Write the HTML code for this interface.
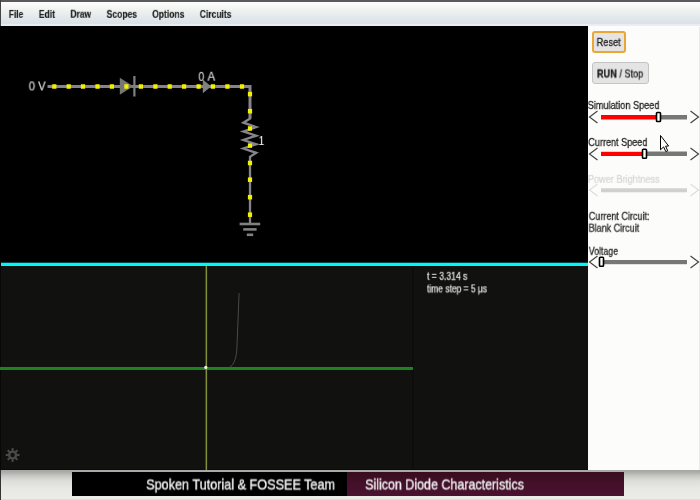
<!DOCTYPE html>
<html><head><meta charset="utf-8">
<style>
html,body{margin:0;padding:0;width:700px;height:500px;overflow:hidden;background:#000;}
body{position:relative;font-family:"Liberation Sans",sans-serif;}
.a{position:absolute;}
.t{position:absolute;white-space:nowrap;line-height:1;transform-origin:0 0;will-change:transform;}
#menubar{left:0;top:0;width:700px;height:26px;background:linear-gradient(#fbfcfb 0px,#fbfcfb 3px,#f1f4f1 9px,#e5eaec 16px,#dbe2ea 22.5px,#dde1eb 23.5px,#e9ecf3 24.5px,#eceef4 26px);}
#menutop{left:0;top:0;width:700px;height:2px;background:#5a5a5a;}
#menuleft{left:0;top:0;width:1px;height:26px;background:#444;}
.mi{font-weight:bold;font-size:12px;color:#1a1a1a;top:9px;}
#canvas{left:0;top:26px;width:588px;height:237px;background:#000;}
#panel{left:588px;top:26px;width:112px;height:444px;background:#fcfcfa;}
#scope{left:0;top:266px;width:588px;height:204px;background:#111110;}
#cyan{left:1px;top:263px;width:587px;height:3px;background:#00f8f8;box-shadow:0 1px 0 #005a5a,0 -1px 0 #004848;}
.btn{position:absolute;box-sizing:border-box;background:#e4e4e4;border-radius:3px;}
.pt{font-size:11px;color:#333;}
#bottom{left:0;top:470px;width:700px;height:30px;background:linear-gradient(#a6a7a3 0px,#abaca8 2px,#c8c9c5 6px,#dddeda 11px,#e7e8e4 18px,#ebece8 26px,#ebece8 28.5px,#d6d7d3 30px);}
</style></head><body>
<div class="a" id="menubar"></div>
<div class="a" id="menutop"></div>
<div class="a" id="menuleft"></div>
<div class="t" style="left:0;top:0;font-size:11px;font-weight:bold;color:#1a1a1a;-webkit-text-stroke:0.15px #1a1a1a;transform:translate(8.82px,8.89px) scaleX(0.7618);">File</div>
<div class="t" style="left:0;top:0;font-size:11px;font-weight:bold;color:#1a1a1a;-webkit-text-stroke:0.15px #1a1a1a;transform:translate(38.82px,8.90px) scaleX(0.7824);">Edit</div>
<div class="t" style="left:0;top:0;font-size:11px;font-weight:bold;color:#1a1a1a;-webkit-text-stroke:0.15px #1a1a1a;transform:translate(70.42px,8.74px) scaleX(0.7685);">Draw</div>
<div class="t" style="left:0;top:0;font-size:11px;font-weight:bold;color:#1a1a1a;-webkit-text-stroke:0.15px #1a1a1a;transform:translate(106.62px,8.85px) scaleX(0.7769);">Scopes</div>
<div class="t" style="left:0;top:0;font-size:11px;font-weight:bold;color:#1a1a1a;-webkit-text-stroke:0.15px #1a1a1a;transform:translate(152.16px,8.85px) scaleX(0.7742);">Options</div>
<div class="t" style="left:0;top:0;font-size:11px;font-weight:bold;color:#1a1a1a;-webkit-text-stroke:0.15px #1a1a1a;transform:translate(199.75px,8.88px) scaleX(0.7733);">Circuits</div>

<div class="a" id="canvas"></div>
<div class="a" id="panel"></div>
<div class="a" style="left:699px;top:27px;width:1px;height:443px;background:#e9e9e7;"></div>

<!-- buttons -->
<div class="btn" style="left:592px;top:31px;width:34px;height:22px;border:2px solid #eca634;"></div>
<div class="t" style="left:0;top:0;font-size:10.5px;font-weight:normal;color:#1c1c1c;-webkit-text-stroke:0.3px #1c1c1c;transform:translate(596.67px,37.05px) scaleX(0.8732);">Reset</div>
<div class="btn" style="left:592px;top:62px;width:57px;height:22px;border:1px solid #c4c4c4;"></div>
<div class="t" style="left:0;top:0;font-size:10.5px;font-weight:normal;color:#1c1c1c;-webkit-text-stroke:0.3px #1c1c1c;transform:translate(596.95px,68.49px) scaleX(0.8716);"><b>RUN</b> / Stop</div>

<div class="t" style="left:0;top:0;font-size:10.5px;font-weight:normal;color:#262626;-webkit-text-stroke:0.3px #262626;transform:translate(587.69px,99.99px) scaleX(0.8715);">Simulation Speed</div>
<div class="t" style="left:0;top:0;font-size:10.5px;font-weight:normal;color:#262626;-webkit-text-stroke:0.3px #262626;transform:translate(588.29px,136.94px) scaleX(0.8649);">Current Speed</div>
<div class="t" style="left:0;top:0;font-size:10.5px;font-weight:normal;color:#d4d4d4;-webkit-text-stroke:0.2px #d4d4d4;transform:translate(587.93px,173.83px) scaleX(0.8710);">Power Brightness</div>
<div class="t" style="left:0;top:0;font-size:10.5px;font-weight:normal;color:#262626;-webkit-text-stroke:0.3px #262626;transform:translate(588.73px,210.84px) scaleX(0.8612);">Current Circuit:</div>
<div class="t" style="left:0;top:0;font-size:10.5px;font-weight:normal;color:#262626;-webkit-text-stroke:0.3px #262626;transform:translate(588.59px,222.72px) scaleX(0.8591);">Blank Circuit</div>
<div class="t" style="left:0;top:0;font-size:10.5px;font-weight:normal;color:#262626;-webkit-text-stroke:0.3px #262626;transform:translate(588.77px,245.85px) scaleX(0.8370);">Voltage</div>

<svg class="a" style="left:588px;top:27px;" width="112" height="443" viewBox="588 27 112 443">
  <g fill="none" stroke-linecap="butt">
    <!-- sim speed -->
    <polyline points="597.5,111 589.5,117 597.5,123" stroke="#444" stroke-width="1.2"/>
    <polyline points="690.5,111 698.5,117 690.5,123" stroke="#444" stroke-width="1.2"/>
    <rect x="601" y="115" width="56" height="4.5" fill="#f00" stroke="none"/>
    <rect x="659" y="115" width="28" height="4.5" fill="#777" stroke="none"/>
    <rect x="656.5" y="112.5" width="4" height="9" fill="#fff" stroke="#000" stroke-width="1.6" rx="0.8"/>
    <!-- current speed -->
    <polyline points="597.5,148 589.5,154 597.5,160" stroke="#444" stroke-width="1.2"/>
    <polyline points="690.5,148 698.5,154 690.5,160" stroke="#444" stroke-width="1.2"/>
    <rect x="601" y="151.8" width="42" height="4.2" fill="#f00" stroke="none"/>
    <rect x="645" y="151.5" width="42" height="4.5" fill="#777" stroke="none"/>
    <rect x="642.5" y="149.3" width="4" height="9" fill="#fff" stroke="#000" stroke-width="1.6" rx="0.8"/>
    <!-- power brightness -->
    <polyline points="597.5,184 589.5,190 597.5,196" stroke="#ddd" stroke-width="1.2"/>
    <polyline points="690.5,184 698.5,190 690.5,196" stroke="#ddd" stroke-width="1.2"/>
    <rect x="601" y="188.3" width="86" height="4" fill="#d0d0d0" stroke="none"/>
    <!-- voltage -->
    <polyline points="597.5,256 589.5,262 597.5,268" stroke="#444" stroke-width="1.2"/>
    <polyline points="690.5,256 698.5,262 690.5,268" stroke="#444" stroke-width="1.2"/>
    <rect x="603" y="260" width="84" height="4.2" fill="#777" stroke="none"/>
    <rect x="599.5" y="257.2" width="4" height="9" fill="#fff" stroke="#000" stroke-width="1.6" rx="0.8"/>
    <!-- cursor -->
    <path d="M660.5,135.5 L660.5,149.8 L663.6,146.9 L665.8,151.6 L667.7,150.8 L665.6,146.2 L668.6,146.0 Z" fill="#fff" stroke="#000" stroke-width="1"/>
  </g>
</svg>

<div class="a" id="cyan"></div>
<div class="a" id="scope"></div>
<div class="a" style="left:0;top:469px;width:588px;height:1px;background:#0b0b0a;"></div>
<div class="a" style="left:0;top:266px;width:1px;height:204px;background:#070707;"></div>

<svg class="a" style="left:0;top:27px;" width="588" height="443" viewBox="0 27 588 443">
  <!-- circuit wires -->
  <g stroke="#84848a" stroke-width="3" fill="none">
    <polyline points="47.5,86.4 120,86.4"/>
    <polyline points="134,86.4 250,86.4 250,118.6"/>
    <polyline points="250,116.5 250,118.6 243.4,122.7 256.2,127.1 243.4,131.4 256.2,135.7 243.4,140 256.2,144.2 243.4,148.5 256.2,152.8 250,156.8 250,224" stroke-width="2.3" stroke-linejoin="miter" stroke-miterlimit="10"/>
    <line x1="120" y1="86.4" x2="134" y2="86.4"/>
  </g>
  <polygon points="119.8,77.7 119.8,94.7 133.2,86.2" fill="#767676"/>
  <rect x="133.3" y="76" width="2.2" height="20.5" fill="#808080"/>
  <polygon points="202.8,79.6 202.8,93.3 211.2,86.4" fill="#808080"/>
  <g stroke="#808080" stroke-width="2.6">
    <line x1="239.6" y1="224" x2="260.2" y2="224"/>
    <line x1="243.2" y1="229.4" x2="256.6" y2="229.4"/>
    <line x1="246.8" y1="234.8" x2="253.2" y2="234.8"/>
  </g>
  <g fill="#f2f200">
    <rect x="52.20" y="84.25" width="4.2" height="4.5"/>
    <rect x="66.60" y="84.25" width="4.2" height="4.5"/>
    <rect x="80.90" y="84.25" width="4.2" height="4.5"/>
    <rect x="95.40" y="84.25" width="4.2" height="4.5"/>
    <rect x="109.80" y="84.25" width="4.2" height="4.5"/>
    <rect x="124.30" y="84.25" width="4.2" height="4.5"/>
    <rect x="138.80" y="84.25" width="4.2" height="4.5"/>
    <rect x="153.30" y="84.25" width="4.2" height="4.5"/>
    <rect x="167.60" y="84.25" width="4.2" height="4.5"/>
    <rect x="182.00" y="84.25" width="4.2" height="4.5"/>
    <rect x="196.50" y="84.25" width="4.2" height="4.5"/>
    <rect x="210.80" y="84.25" width="4.2" height="4.5"/>
    <rect x="225.30" y="84.25" width="4.2" height="4.5"/>
    <rect x="239.90" y="84.25" width="4.2" height="4.5"/>
    <rect x="247.90" y="91.85" width="4.2" height="4.5"/>
    <rect x="247.90" y="108.95" width="4.2" height="4.5"/>
    <rect x="247.90" y="126.25" width="4.2" height="4.5"/>
    <rect x="247.90" y="143.35" width="4.2" height="4.5"/>
    <rect x="247.90" y="160.75" width="4.2" height="4.5"/>
    <rect x="247.90" y="177.45" width="4.2" height="4.5"/>
    <rect x="247.90" y="194.95" width="4.2" height="4.5"/>
    <rect x="247.90" y="212.45" width="4.2" height="4.5"/>
  </g>
  <!-- scope -->
  <rect x="412.3" y="266" width="1.2" height="204" fill="#0a0a0a"/>
  <rect x="0" y="367" width="413" height="3" fill="#1e821e"/>
  <rect x="205.6" y="266" width="1.5" height="204" fill="#82903a"/>
  <path d="M229.5,367 C233,366 236,360 236.8,350 L239.1,293.1" fill="none" stroke="#4a4a4a" stroke-width="1"/>
  <circle cx="205.8" cy="367.4" r="1.6" fill="#eee"/>
  <!-- gear -->
  <g transform="translate(12.6,455)" fill="#4a4a4a">
    <circle r="3.4" fill="none" stroke="#4a4a4a" stroke-width="2.4"/>
    <g><rect x="-1" y="-6.9" width="2" height="3"/><rect x="-1" y="3.9" width="2" height="3"/><rect x="-6.9" y="-1" width="3" height="2"/><rect x="3.9" y="-1" width="3" height="2"/></g>
    <g transform="rotate(45)"><rect x="-1" y="-6.9" width="2" height="3"/><rect x="-1" y="3.9" width="2" height="3"/><rect x="-6.9" y="-1" width="3" height="2"/><rect x="3.9" y="-1" width="3" height="2"/></g>
  </g>
</svg>

<!-- circuit labels -->
<div class="t" style="left:0;top:0;font-size:12px;font-weight:normal;color:#dcdcdc;-webkit-text-stroke:0.2px #dcdcdc;transform:translate(28.74px,80.38px) scaleX(0.9359);">0 V</div>
<div class="t" style="left:0;top:0;font-size:12px;font-weight:normal;color:#dcdcdc;-webkit-text-stroke:0.2px #dcdcdc;transform:translate(198.53px,70.86px) scaleX(0.8334);">0</div>
<div class="t" style="left:0;top:0;font-size:12px;font-weight:normal;color:#dcdcdc;-webkit-text-stroke:0.2px #dcdcdc;transform:translate(207.49px,70.71px) scaleX(0.9604);">A</div>
<div class="t" style="left:0;top:0;font-size:12px;font-weight:normal;color:#dcdcdc;-webkit-text-stroke:0.2px #dcdcdc;transform:translate(258.73px,134.97px) scaleX(0.7914);">1</div>

<!-- scope text -->
<div class="t" style="left:0;top:0;font-size:10px;font-weight:normal;color:#e2e2e2;-webkit-text-stroke:0.25px #e2e2e2;transform:translate(427.02px,271.76px) scaleX(0.8579);">t = 3.314 s</div>
<div class="t" style="left:0;top:0;font-size:10px;font-weight:normal;color:#e2e2e2;-webkit-text-stroke:0.25px #e2e2e2;transform:translate(426.96px,284.32px) scaleX(0.8457);">time step = 5 μs</div>

<!-- bottom caption -->
<div class="a" id="bottom"></div>
<div class="a" style="left:0;top:470px;width:1px;height:30px;background:#333;"></div>
<div class="a" style="left:72px;top:472px;width:276px;height:24px;background:#000;"></div>
<div class="a" style="left:347px;top:472px;width:277px;height:24px;background:linear-gradient(#380c1e,#44102a 50%,#4a1230);"></div>
<div class="t" style="left:0;top:0;font-size:15px;font-weight:normal;color:#f0f0f0;-webkit-text-stroke:0.35px #f0f0f0;transform:translate(146.12px,476.47px) scaleX(0.8434);">Spoken Tutorial &amp; FOSSEE Team</div>
<div class="t" style="left:0;top:0;font-size:15px;font-weight:normal;color:#f0f0f0;-webkit-text-stroke:0.35px #f0f0f0;transform:translate(365.13px,476.47px) scaleX(0.8317);">Silicon Diode Characteristics</div>
</body></html>
